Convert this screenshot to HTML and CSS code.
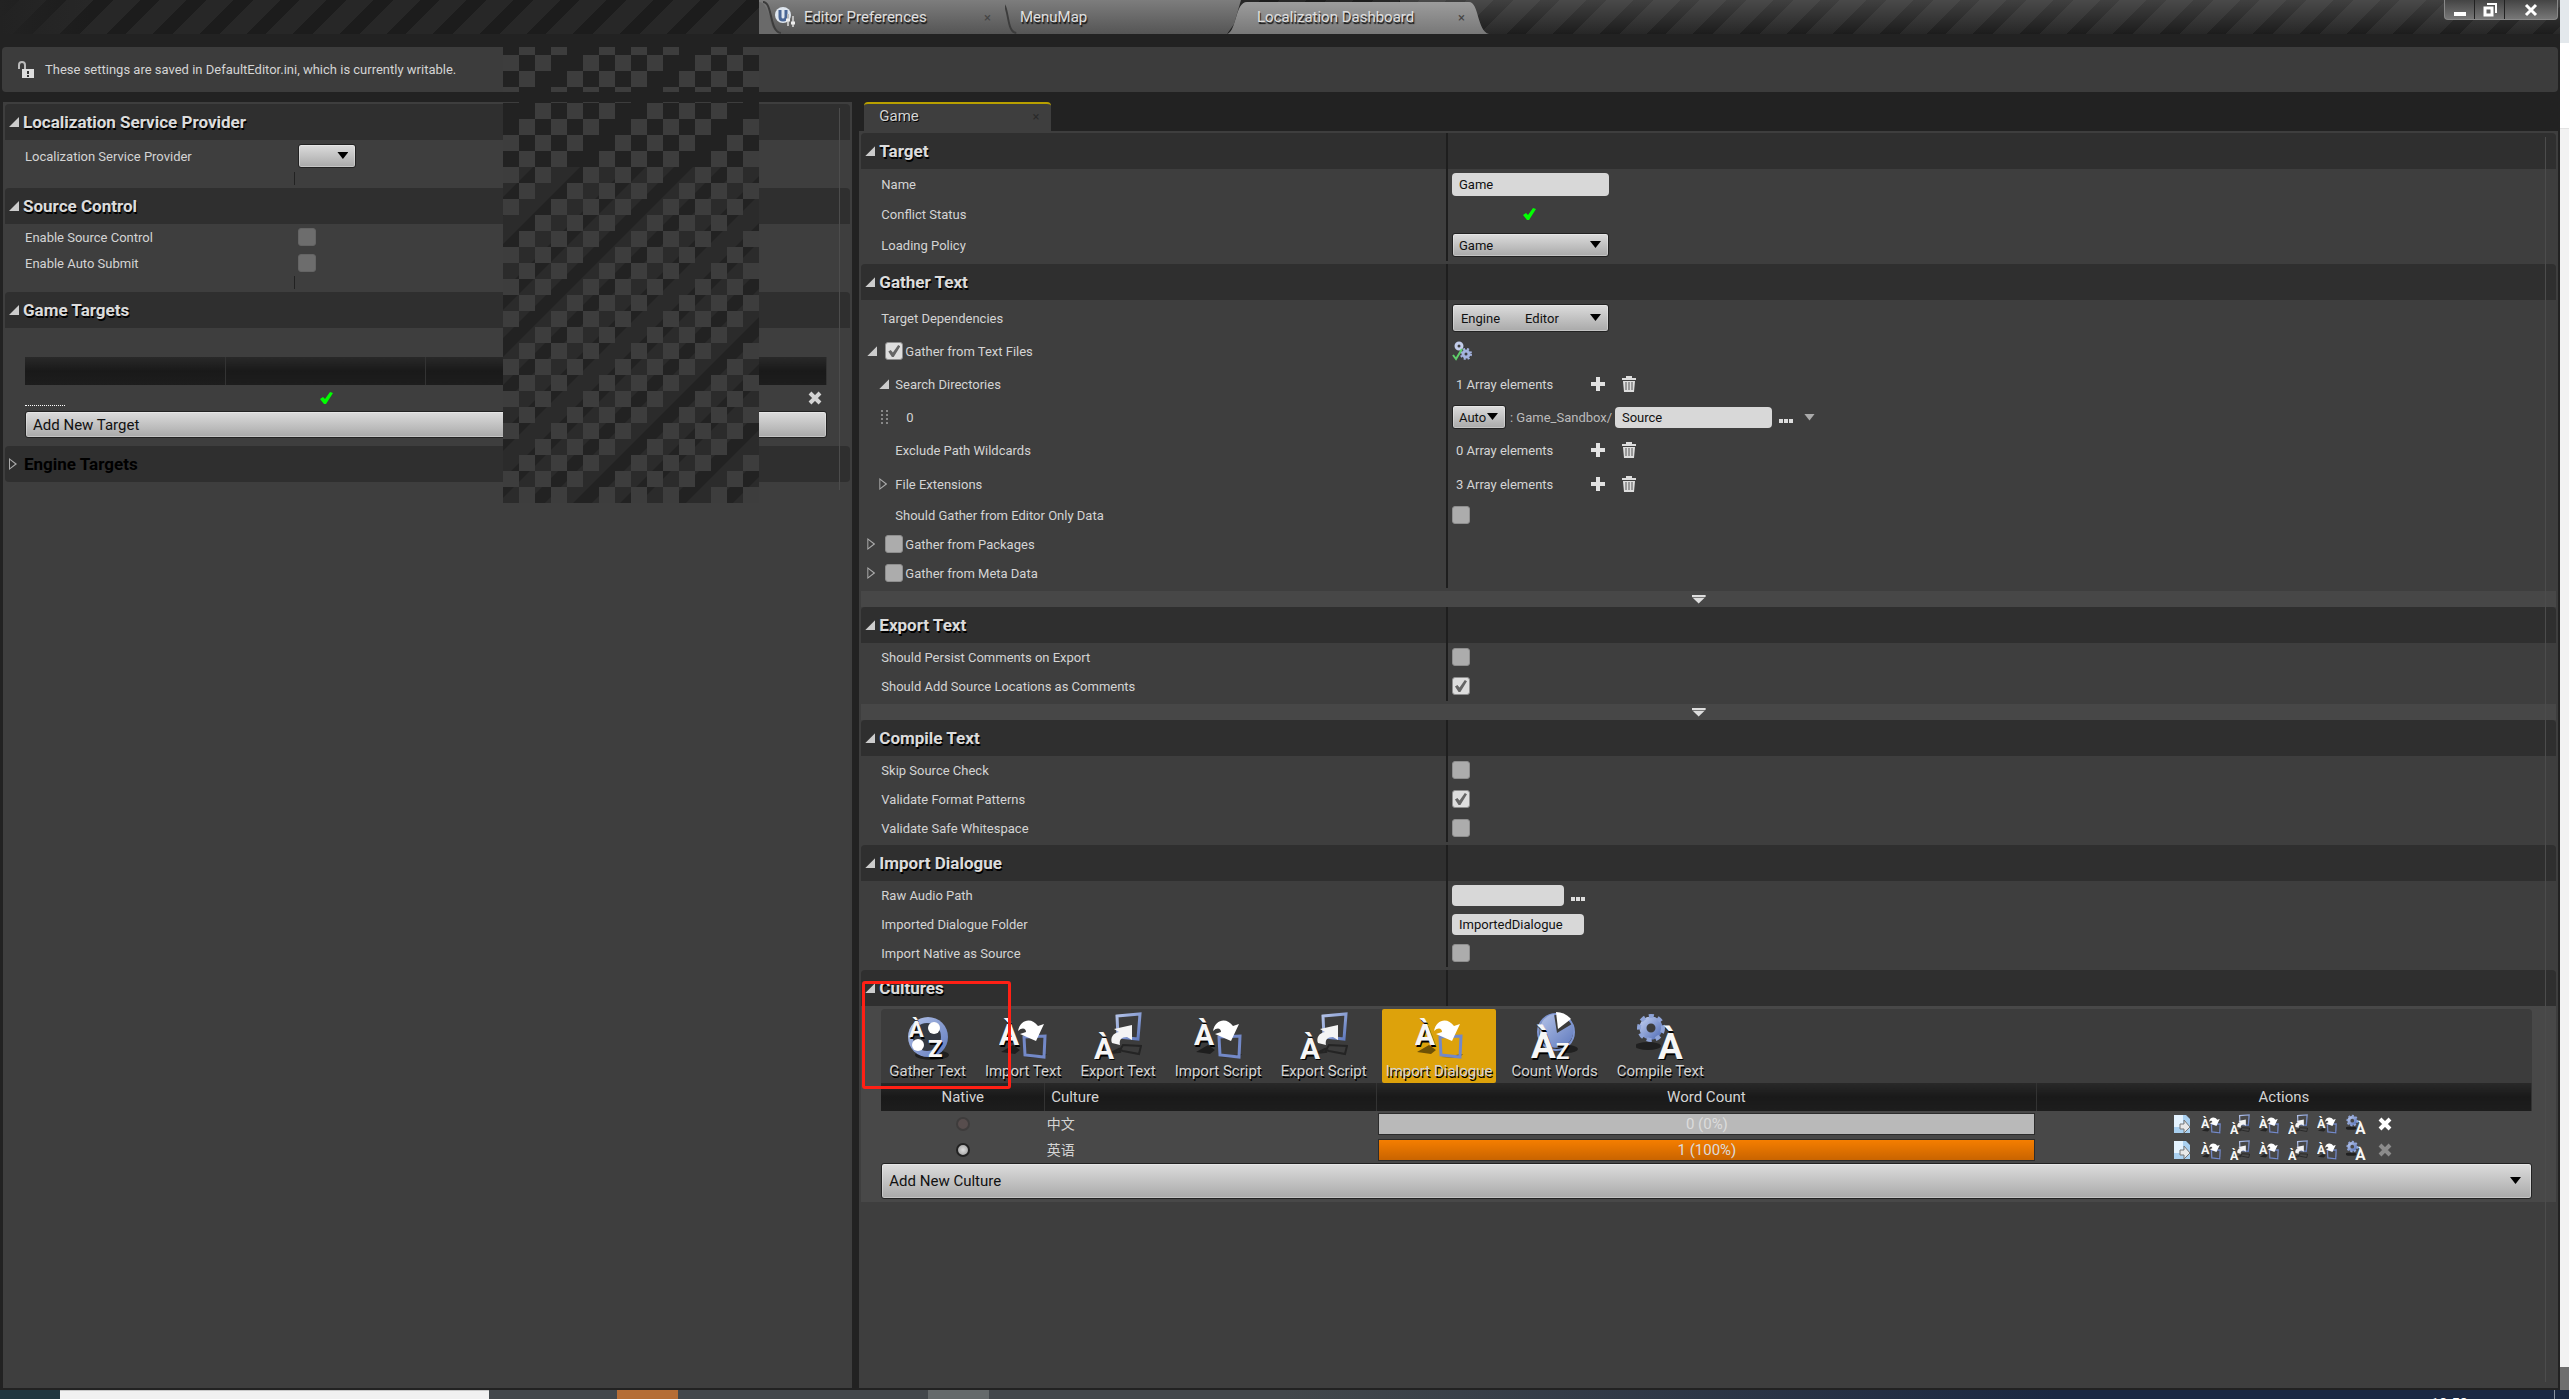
FILE: index.html
```html
<!DOCTYPE html>
<html lang="en">
<head>
    <meta charset="UTF-8">
    <meta name="viewport" content="width=device-width, initial-scale=1.0">
    <title>Localization Dashboard</title>
    <link rel="stylesheet" href="styles.css">
</head>

<body>
    <!-- shared icons -->
    <svg class="defs" aria-hidden="true">
        <defs>
            <linearGradient id="blue" x1="0" y1="0" x2="1" y2="1">
                <stop offset="0" stop-color="#b4c3e8"/>
                <stop offset="1" stop-color="#5f79bd"/>
            </linearGradient>
            <linearGradient id="tabGrey" x1="0" y1="0" x2="0" y2="1">
                <stop offset="0" stop-color="#7d7d7d"/>
                <stop offset="1" stop-color="#555"/>
            </linearGradient>
            <linearGradient id="tabLight" x1="0" y1="0" x2="0" y2="1">
                <stop offset="0" stop-color="#9c9c9c"/>
                <stop offset="1" stop-color="#787878"/>
            </linearGradient>
            <pattern id="stripes" width="47" height="47" patternUnits="userSpaceOnUse">
                <rect width="47" height="47" fill="#2b2b2b"/>
                <path d="M9 0H28L-19 47H-38ZM56 0H75L28 47H9Z" fill="#222"/>
            </pattern>
            <pattern id="cells" width="112" height="112" patternUnits="userSpaceOnUse">
                <path fill="#3d3d3d" d="M16 0h16v16h-16zM48 0h16v16h-16zM96 0h16v16h-16z
                    M0 16h16v16h-16zM32 16h16v16h-16zM80 16h16v16h-16z
                    M16 32h16v16h-16zM64 32h16v16h-16zM96 32h16v16h-16z
                    M0 48h16v16h-16zM48 48h16v16h-16zM80 48h16v16h-16z
                    M32 64h16v16h-16zM64 64h16v16h-16zM96 64h16v16h-16z
                    M16 80h16v16h-16zM48 80h16v16h-16zM80 80h16v16h-16z
                    M0 96h16v16h-16zM32 96h16v16h-16zM64 96h16v16h-16z"/>
            </pattern>
            <symbol id="i-gather" viewBox="0 0 48 48">
                <ellipse cx="28" cy="43" rx="17" ry="5" fill="#202020"/>
                <circle cx="24" cy="25" r="20" fill="url(#blue)"/>
                <circle cx="23" cy="25" r="14" fill="#343943"/>
                <circle cx="30" cy="16" r="6" fill="#fff"/>
                <circle cx="14" cy="33" r="6" fill="#fff"/>
                <text x="5" y="25" class="ic-letter s22">À</text>
                <text x="24" y="45" class="ic-letter s24">Z</text>
            </symbol>
            <symbol id="i-import" viewBox="0 0 48 48">
                <path d="M2 40l12-7 7 5-5 4zM26 45l22-3-4 4z" fill="#000" opacity=".5"/>
                <path d="M25 25l21-1-1 21-19-2z" fill="none" stroke="#7389c8" stroke-width="3"/>
                <text x="0" y="33" class="ic-letter s28">À</text>
                <path d="M19 19c2-12 14-14 20-5l6-2-8 17-16-7 6-2c0-4-4-5-8-1z" fill="#fff"/>
            </symbol>
            <symbol id="i-export" viewBox="0 0 48 48">
                <path d="M26 38l3-5 18 1-2 8-16-3zM17 41l8-4 1 3z" fill="none" stroke="#242424" stroke-width="2"/>
                <path d="M23 4l23-2-2 25-20-2z" fill="none" stroke="url(#blue)" stroke-width="3"/>
                <path d="M18 31c-2-5 1-10 7-11l-5-3 18-4v15l-5-3c-6 0-8 3-7 8z" fill="#f4f4f4"/>
                <text x="0" y="47" class="ic-letter s28">À</text>
            </symbol>
            <symbol id="i-count" viewBox="0 0 48 48">
                <ellipse cx="36" cy="37" rx="11" ry="4" fill="#202020"/>
                <circle cx="25" cy="20" r="18" fill="none" stroke="#7e95d0" stroke-width="2"/>
                <path d="M23 2a17 17 0 1 0 18 10L26 21z" fill="url(#blue)"/>
                <path d="M25 0q9 0 15 7L27 17z" fill="#fff"/>
                <text x="0" y="46" class="ic-letter s34">À</text>
                <text x="25" y="47" class="ic-letter s22">Z</text>
            </symbol>
            <symbol id="i-compile" viewBox="0 0 48 48">
                <ellipse cx="12" cy="34" rx="13" ry="4" fill="#202020"/>
                <circle cx="15" cy="16" r="8" fill="none" stroke="url(#blue)" stroke-width="7"/>
                <circle cx="15" cy="16" r="12" fill="none" stroke="#8fa4d8" stroke-width="4" stroke-dasharray="5 4"/>
                <text x="22" y="47" class="ic-letter s34">À</text>
            </symbol>
            <symbol id="i-doc" viewBox="0 0 18 20">
                <path d="M1 1h12l4 4v14H1z" fill="#a9d0f0"/>
                <path d="M1 1h9v12H1z" fill="#e4f3ff"/>
                <path d="M7 10h4V6l6 7-6 6v-4H7z" fill="#e8e8e8" stroke="#777"/>
            </symbol>
            <symbol id="i-x" viewBox="0 0 14 14">
                <path d="M2 2l10 10M12 2L2 12" stroke="currentColor" stroke-width="4"/>
            </symbol>
            <symbol id="i-ok" viewBox="0 0 14 14">
                <path d="M1 8l3-2 2 2 5-7 3 1-7 11H5z" fill="#0f0"/>
            </symbol>
            <symbol id="i-plus" viewBox="0 0 16 16">
                <path d="M8 1v14M1 8h14" stroke="#e2e2e2" stroke-width="4"/>
            </symbol>
            <symbol id="i-trash" viewBox="0 0 14 16">
                <path d="M5 2V1h4v1M0 3h14" stroke="#ddd" stroke-width="2" fill="none"/>
                <path d="M1 5h12l-1 11H2z" fill="#ddd"/>
                <path d="M4 6v8M7 6v8M10 6v8" stroke="#555"/>
            </symbol>
            <symbol id="i-more" viewBox="0 0 16 14">
                <path d="M1 9h4v4H1zM6 9h4v4H6zM11 9h4v4h-4z" fill="#ddd"/>
            </symbol>
        </defs>
    </svg>

    <div class="screen">
        <div class="app">
            <header class="titlebar">
                <nav class="tabs">
                    <a href="#" class="tab">
                        <svg class="tab-bg" viewBox="0 0 246 34" preserveAspectRatio="none"><path d="M0 0H246V34H0z" fill="url(#tabGrey)"/><path d="M0 2c12 0 8 31 22 31V34H0z" fill="#6a6a6a"/><path d="M4 2c10 0 6 30 18 31" fill="none" stroke="#3c3c3c" stroke-width="2"/></svg>
                        <svg class="tab-icon" viewBox="0 0 20 22"><circle cx="8" cy="9" r="8" fill="#dfe6ef"/><path d="M5 4v7q0 3 3 3t3-3V4" fill="none" stroke="#4b6796" stroke-width="3"/><path d="M13 8v12M18 10v11" stroke="#bbb" stroke-width="2"/><path d="M11 14h4M16 17h4" stroke="#eee" stroke-width="3"/></svg>
                        <span>Editor Preferences</span>
                        <i class="tab-x">×</i>
                    </a>
                    <a href="#" class="tab">
                        <svg class="tab-bg" viewBox="0 0 236 34" preserveAspectRatio="none"><path d="M0 0H236V34H0z" fill="url(#tabGrey)"/><path d="M-6 2c12 0 6 30 18 31" fill="none" stroke="#3c3c3c" stroke-width="2"/></svg>
                        <span>MenuMap</span>
                    </a>
                    <a href="#" class="tab tab-active">
                        <svg class="tab-bg" viewBox="0 0 262 34" preserveAspectRatio="none"><path d="M0 34V0H14L7 24z" fill="url(#tabGrey)"/><path d="M0 34C10 31 8 2 20 2H242C252 2 250 31 262 34z" fill="url(#tabLight)"/></svg>
                        <span>Localization Dashboard</span>
                        <i class="tab-x">×</i>
                    </a>
                </nav>
                <div class="win-buttons">
                    <button type="button" aria-label="Minimize"><svg width="14" height="14" viewBox="0 0 14 14"><path d="M1 11h12" stroke="#fff" stroke-width="4"/></svg></button>
                    <button type="button" aria-label="Restore"><svg width="14" height="14" viewBox="0 0 14 14"><path d="M2 5h7v7H2z" fill="none" stroke="#fff" stroke-width="3"/><path d="M4 1h9v9" fill="none" stroke="#fff" stroke-width="2"/></svg></button>
                    <button type="button" aria-label="Close" class="win-close"><svg width="14" height="14" viewBox="0 0 14 14"><path d="M2 2l10 10M12 2L2 12" stroke="#fff" stroke-width="3"/></svg></button>
                </div>
            </header>

            <div class="notice">
                <svg width="18" height="18" viewBox="0 0 18 18"><path d="M2 8V4q0-3 3-3t3 3v5" fill="none" stroke="#bbb" stroke-width="2"/><path d="M5 8h12v9H5z" fill="#ddd"/><path d="M11 10v3M11 14v2" stroke="#333" stroke-width="2"/></svg>
                <p>These settings are saved in DefaultEditor.ini, which is currently writable.</p>
            </div>

            <main class="columns">
                <section class="settings">
                    <div class="section">
                        <h2><button type="button" class="arrow" aria-label="Collapse"></button>Localization Service Provider</h2>
                        <div class="row h32">
                            <label class="name" for="provider">Localization Service Provider</label>
                            <div class="value"><span class="select w58"><select id="provider"><option></option></select></span></div>
                        </div>
                        <div class="tail"></div>
                    </div>
                    <div class="section">
                        <h2><button type="button" class="arrow" aria-label="Collapse"></button>Source Control</h2>
                        <div class="row h26">
                            <label class="name" for="sc">Enable Source Control</label>
                            <div class="value"><input type="checkbox" id="sc" disabled></div>
                        </div>
                        <div class="row h26">
                            <label class="name" for="submit">Enable Auto Submit</label>
                            <div class="value"><input type="checkbox" id="submit" disabled></div>
                        </div>
                        <div class="tail"></div>
                    </div>
                    <div class="section">
                        <h2><button type="button" class="arrow" aria-label="Collapse"></button>Game Targets</h2>
                        <div class="targets">
                            <table>
                                <thead><tr><th></th><th></th><th></th><th></th></tr></thead>
                                <tbody><tr>
                                    <td><a href="#" class="dotted" aria-label="Target"></a></td>
                                    <td class="center"><svg width="14" height="14"><use href="#i-ok"/></svg></td>
                                    <td></td>
                                    <td class="right"><button type="button" class="icon" aria-label="Delete"><svg width="14" height="14"><use href="#i-x"/></svg></button></td>
                                </tr></tbody>
                            </table>
                            <button type="button" class="bar-button">Add New Target</button>
                        </div>
                    </div>
                    <div class="section closed">
                        <h2><button type="button" class="arrow" aria-label="Expand"></button>Engine Targets</h2>
                    </div>
                    <svg class="checker" viewBox="0 0 256 456">
                        <rect width="256" height="456" fill="#222"/>
                        <rect y="120" width="256" height="336" fill="url(#stripes)"/>
                        <g transform="translate(0 -8)"><rect y="8" width="256" height="456" fill="url(#cells)"/></g>
                        <rect y="45" width="256" height="10" fill="#222"/>
                    </svg>
                </section>

                <section class="details">
                    <div class="doc-tab"><span>Game</span><i class="tab-x">×</i></div>
                    <div class="panel">
                        <div class="section">
                            <h2><button type="button" class="arrow" aria-label="Collapse"></button>Target</h2>
                            <div class="row h30">
                                <label class="name" for="tname">Name</label>
                                <div class="value"><input type="text" class="w157" id="tname" value="Game"></div>
                            </div>
                            <div class="row h30">
                                <span class="name">Conflict Status</span>
                                <div class="value"><span class="status"><svg width="14" height="14"><use href="#i-ok"/></svg></span></div>
                            </div>
                            <div class="row h32">
                                <label class="name" for="policy">Loading Policy</label>
                                <div class="value"><span class="select w157"><select id="policy"><option>Game</option></select></span></div>
                            </div>
                        </div>

                        <div class="section">
                            <h2><button type="button" class="arrow" aria-label="Collapse"></button>Gather Text</h2>
                            <div class="row h36">
                                <span class="name">Target Dependencies</span>
                                <div class="value"><span class="select tall w157"><button type="button"><span>Engine</span><span>Editor</span></button></span></div>
                            </div>
                            <div class="row h30">
                                <div class="name sub"><button type="button" class="arrow" aria-label="Collapse"></button><input type="checkbox" id="gtext" checked><label for="gtext">Gather from Text Files</label></div>
                                <div class="value"><svg width="20" height="20" viewBox="0 0 20 20"><circle cx="7" cy="5" r="3" fill="none" stroke="#c3cdea" stroke-width="3"/><circle cx="14" cy="13" r="3" fill="none" stroke="#a3b2de" stroke-width="3"/><circle cx="14" cy="13" r="5" fill="none" stroke="#a3b2de" stroke-width="2" stroke-dasharray="2 2"/><path d="M1 14l3 4 6-10" fill="none" stroke="#5fcf6a" stroke-width="2"/></svg></div>
                            </div>
                            <div class="row h36">
                                <div class="name sub2"><button type="button" class="arrow" aria-label="Collapse"></button>Search Directories</div>
                                <div class="value array"><span>1 Array elements</span><button type="button" class="icon" aria-label="Add"><svg width="16" height="16"><use href="#i-plus"/></svg></button><button type="button" class="icon" aria-label="Empty"><svg width="14" height="16"><use href="#i-trash"/></svg></button></div>
                            </div>
                            <div class="row h30">
                                <label class="name sub3" for="dir"><i class="grip"></i>0</label>
                                <div class="value path">
                                    <span class="select auto w54"><select aria-label="Path root"><option>Auto</option></select></span>
                                    <span class="root">: Game_Sandbox/</span>
                                    <input type="text" class="w157" id="dir" value="Source">
                                    <button type="button" class="icon" aria-label="Browse"><svg width="16" height="14"><use href="#i-more"/></svg></button>
                                    <button type="button" class="icon caret" aria-label="Options"></button>
                                </div>
                            </div>
                            <div class="row h36">
                                <div class="name leaf">Exclude Path Wildcards</div>
                                <div class="value array"><span>0 Array elements</span><button type="button" class="icon" aria-label="Add"><svg width="16" height="16"><use href="#i-plus"/></svg></button><button type="button" class="icon" aria-label="Empty"><svg width="14" height="16"><use href="#i-trash"/></svg></button></div>
                            </div>
                            <div class="row h32">
                                <div class="name sub2"><button type="button" class="arrow open" aria-label="Expand"></button>File Extensions</div>
                                <div class="value array"><span>3 Array elements</span><button type="button" class="icon" aria-label="Add"><svg width="16" height="16"><use href="#i-plus"/></svg></button><button type="button" class="icon" aria-label="Empty"><svg width="14" height="16"><use href="#i-trash"/></svg></button></div>
                            </div>
                            <div class="row h30">
                                <label class="name leaf" for="eonly">Should Gather from Editor Only Data</label>
                                <div class="value"><input type="checkbox" id="eonly"></div>
                            </div>
                            <div class="row h28">
                                <div class="name sub"><button type="button" class="arrow open" aria-label="Expand"></button><input type="checkbox" id="gpack"><label for="gpack">Gather from Packages</label></div>
                                <div class="value"></div>
                            </div>
                            <div class="row h30">
                                <div class="name sub"><button type="button" class="arrow open" aria-label="Expand"></button><input type="checkbox" id="gmeta"><label for="gmeta">Gather from Meta Data</label></div>
                                <div class="value"></div>
                            </div>
                            <button type="button" class="advanced" aria-label="Show advanced"><i></i></button>
                        </div>

                        <div class="section">
                            <h2><button type="button" class="arrow" aria-label="Collapse"></button>Export Text</h2>
                            <div class="row h28">
                                <label class="name" for="persist">Should Persist Comments on Export</label>
                                <div class="value"><input type="checkbox" id="persist"></div>
                            </div>
                            <div class="row h30">
                                <label class="name" for="addsrc">Should Add Source Locations as Comments</label>
                                <div class="value"><input type="checkbox" id="addsrc" checked></div>
                            </div>
                            <button type="button" class="advanced" aria-label="Show advanced"><i></i></button>
                        </div>

                        <div class="section">
                            <h2><button type="button" class="arrow" aria-label="Collapse"></button>Compile Text</h2>
                            <div class="row h28">
                                <label class="name" for="skip">Skip Source Check</label>
                                <div class="value"><input type="checkbox" id="skip"></div>
                            </div>
                            <div class="row h30">
                                <label class="name" for="vformat">Validate Format Patterns</label>
                                <div class="value"><input type="checkbox" id="vformat" checked></div>
                            </div>
                            <div class="row h28">
                                <label class="name" for="vspace">Validate Safe Whitespace</label>
                                <div class="value"><input type="checkbox" id="vspace"></div>
                            </div>
                        </div>

                        <div class="section">
                            <h2><button type="button" class="arrow" aria-label="Collapse"></button>Import Dialogue</h2>
                            <div class="row h28">
                                <label class="name" for="raw">Raw Audio Path</label>
                                <div class="value path"><input type="text" class="w112" id="raw" value=""><button type="button" class="icon" aria-label="Browse"><svg width="16" height="14"><use href="#i-more"/></svg></button></div>
                            </div>
                            <div class="row h30">
                                <label class="name" for="folder">Imported Dialogue Folder</label>
                                <div class="value path"><input type="text" class="w132" id="folder" value="ImportedDialogue"></div>
                            </div>
                            <div class="row h28">
                                <label class="name" for="native">Import Native as Source</label>
                                <div class="value"><input type="checkbox" id="native"></div>
                            </div>
                        </div>

                        <div class="section cultures">
                            <h2><button type="button" class="arrow" aria-label="Collapse"></button>Cultures</h2>
                            <div class="cultures-body">
                                <div class="toolbar">
                                    <button type="button"><svg><use href="#i-gather"/></svg>Gather Text</button>
                                    <button type="button"><svg><use href="#i-import"/></svg>Import Text</button>
                                    <button type="button"><svg><use href="#i-export"/></svg>Export Text</button>
                                    <button type="button"><svg><use href="#i-import"/></svg>Import Script</button>
                                    <button type="button"><svg><use href="#i-export"/></svg>Export Script</button>
                                    <button type="button" class="hot"><svg><use href="#i-import"/></svg>Import Dialogue</button>
                                    <button type="button"><svg><use href="#i-count"/></svg>Count Words</button>
                                    <button type="button"><svg><use href="#i-compile"/></svg>Compile Text</button>
                                </div>
                                <table>
                                    <colgroup><col class="c-native"><col class="c-culture"><col class="c-words"><col class="c-actions"></colgroup>
                                    <thead><tr><th>Native</th><th class="left">Culture</th><th>Word Count</th><th>Actions</th></tr></thead>
                                    <tbody>
                                        <tr>
                                            <td class="center"><input type="radio" name="nat" aria-label="中文" disabled></td>
                                            <td class="lang">中文</td>
                                            <td><div class="progress"><span>0 (0%)</span></div></td>
                                            <td>
                                                <div class="actions">
                                                    <button type="button" class="icon" aria-label="Edit"><svg><use href="#i-doc"/></svg></button>
                                                    <button type="button" class="icon" aria-label="Import Text"><svg><use href="#i-import"/></svg></button>
                                                    <button type="button" class="icon" aria-label="Export Text"><svg><use href="#i-export"/></svg></button>
                                                    <button type="button" class="icon" aria-label="Import Script"><svg><use href="#i-import"/></svg></button>
                                                    <button type="button" class="icon" aria-label="Export Script"><svg><use href="#i-export"/></svg></button>
                                                    <button type="button" class="icon" aria-label="Import Dialogue"><svg><use href="#i-import"/></svg></button>
                                                    <button type="button" class="icon" aria-label="Compile"><svg><use href="#i-compile"/></svg></button>
                                                    <button type="button" class="icon del" aria-label="Delete"><svg><use href="#i-x"/></svg></button>
                                                </div>
                                            </td>
                                        </tr>
                                        <tr>
                                            <td class="center"><input type="radio" name="nat" aria-label="英语" checked></td>
                                            <td class="lang">英语</td>
                                            <td><div class="progress full"><span>1 (100%)</span></div></td>
                                            <td>
                                                <div class="actions">
                                                    <button type="button" class="icon" aria-label="Edit"><svg><use href="#i-doc"/></svg></button>
                                                    <button type="button" class="icon" aria-label="Import Text"><svg><use href="#i-import"/></svg></button>
                                                    <button type="button" class="icon" aria-label="Export Text"><svg><use href="#i-export"/></svg></button>
                                                    <button type="button" class="icon" aria-label="Import Script"><svg><use href="#i-import"/></svg></button>
                                                    <button type="button" class="icon" aria-label="Export Script"><svg><use href="#i-export"/></svg></button>
                                                    <button type="button" class="icon" aria-label="Import Dialogue"><svg><use href="#i-import"/></svg></button>
                                                    <button type="button" class="icon" aria-label="Compile"><svg><use href="#i-compile"/></svg></button>
                                                    <button type="button" class="icon del" aria-label="Delete" disabled><svg><use href="#i-x"/></svg></button>
                                                </div>
                                            </td>
                                        </tr>
                                    </tbody>
                                </table>
                                <span class="select big"><button type="button" class="bar-button">Add New Culture</button></span>
                            </div>
                            <div class="marker"></div>
                        </div>
                    </div>
                </section>
            </main>
        </div>
        <div class="side"></div>
    </div>

    <footer class="taskbar">
        <div class="start"></div>
        <div class="search"></div>
        <div class="task orange"></div>
        <div class="task grey"></div>
        <time>18:58</time>
        <div class="show-desktop"></div>
    </footer>
</body>
</html>
```
FILE: styles.css
```css
*
{
    margin:0;
    padding:0;
    box-sizing:border-box;
}
body
{
    min-height:100vh;
    display:flex;
    flex-direction:column;
    background:#222;
    color:#d4d4d4;
    font-family:Roboto, "Noto Sans CJK SC", sans-serif;
    font-size:13px;
    overflow-x:hidden;
}
button, input, select
{
    font:inherit;
    color:inherit;
    border:0;
    background:none;
    appearance:none;
}
a
{
    color:inherit;
    text-decoration:none;
}
svg
{
    display:block;
    flex:none;
}
.defs
{
    position:absolute;
    width:0;
    height:0;
}
.ic-letter
{
    font-family:Roboto, sans-serif;
    font-weight:bold;
    fill:#f6f6f6;
}
.s22 { font-size:22px; }
.s24 { font-size:24px; }
.s28 { font-size:30px; }
.s34 { font-size:37px; }

.screen
{
    flex:1;
    display:flex;
}
.app
{
    flex:1;
    min-width:0;
    display:flex;
    flex-direction:column;
    padding-bottom:2px;
}
.side
{
    width:9px;
    background:linear-gradient(#e3e8ec 43px, #fff 43px, #fff 128px, #d4d4d4 128px, #f2f2f2 129px, #f2f2f2 1367px, #6e6e6e 1367px);
}

/* title bar */
.titlebar
{
    height:34px;
    display:flex;
    background:
        linear-gradient(90deg, #222 0, transparent 90px),
        linear-gradient(rgba(255,255,255,0.16), transparent) 1400px 0 no-repeat,
        repeating-linear-gradient(135deg, #1c1c1c 0, #1c1c1c 14px, #272727 14px, #272727 33px);
}
.tabs
{
    display:flex;
    margin-left:759px;
    flex:1;
}
.tab
{
    position:relative;
    height:34px;
    width:246px;
    display:flex;
    align-items:center;
    padding-left:15px;
    font-size:15px;
    color:#e0e0e0;
    text-shadow:1px 2px 1px #111;
}
.tab:first-child
{
    padding-left:16px;
}
.tab:nth-child(2)
{
    width:222px;
}
.tab-active
{
    width:262px;
    padding-left:30px;
}
.tab-bg
{
    position:absolute;
    left:0;
    top:0;
    width:100%;
    height:100%;
}
.tab span, .tab-icon, .tab i
{
    position:relative;
}
.tab-icon
{
    width:20px;
    height:22px;
    margin-right:9px;
}
.tab-x
{
    margin-left:auto;
    margin-right:14px;
    font-style:normal;
    font-size:13px;
    color:#444;
    text-shadow:none;
}
.tab-active .tab-x
{
    margin-right:24px;
}
.win-buttons
{
    display:flex;
    height:20px;
    margin-right:2px;
    border:1px solid #888;
    border-top:0;
    border-radius:0 0 4px 4px;
    background:linear-gradient(#444, #777);
}
.win-buttons button
{
    width:30px;
    display:flex;
    align-items:center;
    justify-content:center;
    border-right:1px solid #222;
}
.win-buttons .win-close
{
    width:52px;
    border-right:0;
}

.notice
{
    height:45px;
    margin:13px 2px 10px;
    padding-left:15px;
    display:flex;
    align-items:center;
    gap:10px;
    background:#3c3c3c;
    border-radius:4px;
}

/* two columns */
.columns
{
    flex:1;
    display:grid;
    grid-template-columns:minmax(0,1fr) minmax(0,2fr);
    gap:7px;
    margin:0 2px 0 3px;
}
.settings
{
    position:relative;
    background:#3e3e3e;
    padding:2px;
}
.details
{
    display:flex;
    flex-direction:column;
}
.doc-tab
{
    width:187px;
    height:29px;
    margin-left:5px;
    padding-left:15px;
    padding-bottom:3px;
    display:flex;
    align-items:center;
    font-size:15px;
    text-shadow:1px 1px #000;
    background:#3e3e3e;
    border-top:2px solid #b8a000;
    border-radius:4px 4px 0 0;
}
.doc-tab .tab-x
{
    margin-right:12px;
    color:#2a2a2a;
}
.panel
{
    position:relative;
    flex:1;
    background:#3e3e3e;
    padding:2px;
}
/* thin scroll line over both panels */
.panel::after, .settings::after
{
    content:"";
    position:absolute;
    top:6px;
    bottom:6px;
    right:12px;
    width:1px;
    background:#4c4c4c;
}
.settings::after
{
    bottom:auto;
    height:382px;
}

/* property sections */
.section
{
    padding-bottom:3px;
}
.section h2
{
    position:relative;
    height:36px;
    padding-left:4px;
    display:flex;
    align-items:center;
    gap:4px;
    background:#2f2f2f;
    border-radius:4px 4px 0 0;
    font-size:17px;
    font-weight:bold;
    color:#dcdcdc;
    text-shadow:1px 2px #000;
}
.panel .section h2::after
{
    content:"";
    position:absolute;
    left:34.5%;
    top:0;
    bottom:0;
    width:2px;
    background:#1e1e1e;
}
.arrow
{
    flex:none;
    width:10px;
    height:10px;
    background:#ccc;
    clip-path:polygon(100% 0, 100% 100%, 0 100%);
}
.arrow.open, .closed .arrow
{
    height:12px;
    width:8px;
    background:#aaa;
    clip-path:polygon(0 0, 100% 50%, 0 100%, 0 0, 1px 2px, 1px 10px, 6px 6px, 1px 2px);
}
.section.closed h2
{
    gap:7px;
    color:#000;
    text-shadow:none;
    border-radius:4px;
}
.row
{
    display:grid;
    grid-template-columns:minmax(0,345fr) minmax(0,655fr);
    align-items:stretch;
}
.h26 { height:26px; }
.h28 { height:28px; }
.h30 { height:30px; }
.h32 { height:32px; }
.h36 { height:36px; }
.name, .value
{
    display:flex;
    align-items:center;
    white-space:nowrap;
}
.name { padding-left:20px; }
.sub
{
    padding-left:6px;
    gap:2px;
}
.sub .arrow
{
    margin-right:6px;
}
.sub .arrow.open
{
    margin-right:8px;
}
.sub2
{
    padding-left:18px;
    gap:6px;
}
.sub2 .arrow.open
{
    margin-right:2px;
}
.sub3
{
    padding-left:20px;
    gap:18px;
}
.leaf { padding-left:34px; }
.grip
{
    width:7px;
    height:18px;
    background:repeating-linear-gradient(#3e3e3e 0, #3e3e3e 2px, transparent 2px, transparent 4px), linear-gradient(90deg, #888 2px, transparent 2px, transparent 5px, #888 5px);
}
.value
{
    border-left:2px solid #1e1e1e;
    padding-left:4px;
}
.settings .row
{
    grid-template-columns:minmax(0,340fr) minmax(0,660fr);
}
.settings .value
{
    border-color:transparent;
}
.tail
{
    width:1px;
    height:13px;
    margin-left:289px;
    background:#222;
}
input[type="text"]
{
    height:23px;
    padding:0 7px;
    border-radius:4px;
    background:#d8d8d8;
    color:#111;
}
.path input[type="text"]
{
    height:21px;
}
.w54 { width:54px; }
.w58 { width:58px; }
.w112 { width:112px; }
.w132 { width:132px; }
.w157 { width:157px; }
input[type="checkbox"]
{
    width:18px;
    height:18px;
    border-radius:3px;
    background:#acacac;
    border:1px solid #8e8e8e;
}
input[type="checkbox"]:disabled
{
    background:#6d6d6d;
    border-color:#646464;
}
input[type="checkbox"]:checked
{
    background:#dedede;
}
input[type="checkbox"]:checked::before
{
    content:"";
    display:block;
    width:12px;
    height:12px;
    margin:2px;
    background:#666;
    clip-path:polygon(0 55%, 20% 42%, 38% 62%, 82% 0, 100% 10%, 45% 100%, 30% 100%);
}
.select
{
    position:relative;
    display:block;
}
.select select, .select button
{
    display:flex;
    align-items:center;
    width:100%;
    height:24px;
    padding:0 6px;
    border:1px solid #222;
    border-radius:3px;
    background:linear-gradient(#dcdcdc, #a9a9a9);
    box-shadow:inset 0 0 0 1px rgba(255,255,255,0.3);
    color:#111;
}
.select.tall button
{
    height:28px;
    padding:0 8px;
    gap:25px;
}
.select::after
{
    content:"";
    position:absolute;
    right:8px;
    top:50%;
    width:11px;
    height:7px;
    margin-top:-4px;
    background:#000;
    clip-path:polygon(0 0, 100% 0, 50% 100%);
    pointer-events:none;
}
.status
{
    width:155px;
    display:flex;
    justify-content:center;
}
.array span
{
    width:132px;
    padding-left:4px;
}
.array .icon
{
    margin-left:6px;
    margin-right:10px;
}
.icon
{
    display:flex;
    cursor:pointer;
}
.path .icon { margin-left:6px; }
.root
{
    width:109px;
    padding-left:4px;
    color:#bbb;
}
.path .caret
{
    margin-left:10px;
    width:11px;
    height:7px;
    background:#aaa;
    clip-path:polygon(0 0, 100% 0, 50% 100%);
}
.advanced
{
    width:100%;
    height:16px;
    margin-top:3px;
    margin-bottom:-3px;
    padding-right:20px;
    display:flex;
    justify-content:center;
    align-items:center;
    background:#474747;
}
.advanced i
{
    width:14px;
    height:9px;
    border-top:2px solid #ddd;
    background:linear-gradient(#777 1px, #ddd 1px);
    clip-path:polygon(0 0, 100% 0, 100% 25%, 50% 100%, 0 25%);
}

/* tables */
table
{
    width:100%;
    border-collapse:collapse;
    table-layout:fixed;
    font-size:15px;
}
th
{
    height:28px;
    font-weight:normal;
    background:linear-gradient(#292929, #191919 50%, #1d1d1d);
    border-right:1px solid #333;
}
th.left
{
    text-align:left;
    padding-left:6px;
}
td { height:26px; }
.center svg, .center input
{
    margin:0 auto;
}
.center { text-align:center; }
.targets
{
    padding:29px 23px 5px 20px;
}
.right .icon
{
    margin-left:auto;
    margin-right:5px;
}
.dotted
{
    display:block;
    width:40px;
    height:16px;
    border-bottom:1px dotted #fff;
}
.bar-button
{
    width:100%;
    height:27px;
    padding:0 7px;
    border:1px solid #222;
    border-radius:3px;
    background:linear-gradient(#dcdcdc, #a9a9a9);
    box-shadow:inset 0 0 0 1px rgba(255,255,255,0.3);
    color:#111;
    font-size:15px;
    text-align:left;
}
.select.big .bar-button
{
    height:36px;
    padding:0 7px;
    font-size:15px;
}
.big::after { right:11px; }

/* covered area of the settings panel */
.checker
{
    position:absolute;
    left:500px;
    top:-55px;
    width:256px;
    height:456px;
    z-index:2;
}

.cultures { position:relative; }
.cultures-body
{
    padding:3px 24px 3px 20px;
    background:#484848;
}
.toolbar
{
    height:74px;
    padding-left:4px;
    display:flex;
    gap:11px;
    background:#3c3c3c;
    border-radius:4px 4px 0 0;
}
.toolbar button
{
    padding:3px 4px 0;
    display:flex;
    flex-direction:column;
    align-items:center;
    gap:2px;
    font-size:15px;
    text-shadow:1px 2px #000;
}
.toolbar svg
{
    width:48px;
    height:48px;
}
.toolbar .hot
{
    background:#dda20b;
    border-radius:2px;
}
.c-native { width:9.9%; }
.c-culture { width:20.1%; }
.c-words { width:40%; }
.c-actions { width:30%; }
.lang
{
    font-size:14px;
    line-height:20px;
    padding-left:2px;
}
input[type="radio"]
{
    display:block;
    width:14px;
    height:14px;
    border:2px solid #222;
    border-radius:50%;
    background:radial-gradient(#ddd, #999);
}
input[type="radio"]:disabled
{
    background:#574d4d;
    border-color:#3e3c3c;
}
.progress
{
    height:22px;
    margin:0 1px 0 2px;
    display:flex;
    align-items:center;
    justify-content:center;
    border:1px solid #2c2c2c;
    background:#b9b9b9;
    color:#dcdcdc;
}
.progress.full
{
    background:linear-gradient(#f57e00, #c96400);
}
.actions
{
    display:flex;
    justify-content:center;
    gap:9px;
}
.actions svg
{
    width:20px;
    height:20px;
}
.actions .del
{
    color:#fff;
}
.actions .del svg
{
    width:14px;
    height:14px;
    margin:3px;
}
.actions .del:disabled { color:#8c8c8c; }
/* red highlight round the first tool */
.marker
{
    position:absolute;
    left:1px;
    top:11px;
    width:149px;
    height:108px;
    border:3px solid #ff2015;
    border-radius:3px;
}

.taskbar
{
    height:9px;
    overflow:hidden;
    display:flex;
    background:linear-gradient(90deg, #42474b 50%, #1b2842 80%);
}
.start
{
    width:60px;
    background:#21363f;
}
.search
{
    width:429px;
    background:#f1f1f1;
    border-top:1px solid #c8c8c8;
}
.task { width:61px; }
.orange
{
    margin-left:128px;
    background:#b56d35;
}
.grey
{
    margin-left:250px;
    background:#656a6b;
}
.taskbar time
{
    margin-left:auto;
    margin-right:86px;
    padding-top:5px;
    font-size:15px;
    color:#fff;
}
.show-desktop
{
    width:15px;
    border-left:1px solid #8a93a0;
}
```
